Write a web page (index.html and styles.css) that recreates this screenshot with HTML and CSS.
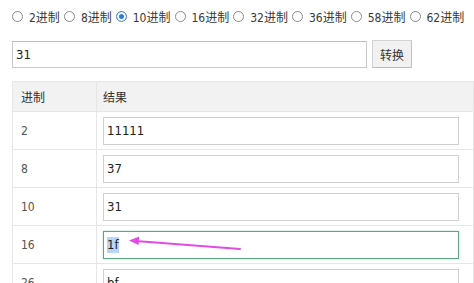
FILE: index.html
```html
<!DOCTYPE html>
<html lang="zh">
<head>
<meta charset="utf-8">
<title>进制转换</title>
<link rel="stylesheet" href="styles.css">
</head>
<body>
<div class="page">
  <div class="radios">
    <label class="opt"><input type="radio" name="base"><span>2进制</span></label>
    <label class="opt"><input type="radio" name="base"><span>8进制</span></label>
    <label class="opt"><input type="radio" name="base" checked><span>10进制</span></label>
    <label class="opt"><input type="radio" name="base"><span>16进制</span></label>
    <label class="opt"><input type="radio" name="base"><span>32进制</span></label>
    <label class="opt"><input type="radio" name="base"><span>36进制</span></label>
    <label class="opt"><input type="radio" name="base"><span>58进制</span></label>
    <label class="opt"><input type="radio" name="base"><span>62进制</span></label>
  </div>
  <div class="form-row">
    <input class="num" type="text" value="31">
    <button class="btn" type="button">转换</button>
  </div>
  <table class="result">
    <colgroup><col class="col-base"><col class="col-val"></colgroup>
    <thead>
      <tr><th>进制</th><th class="c-val">结果</th></tr>
    </thead>
    <tbody>
      <tr><td>2</td><td class="c-val"><input class="field" type="text" value="11111"></td></tr>
      <tr><td>8</td><td class="c-val"><input class="field" type="text" value="37"></td></tr>
      <tr><td>10</td><td class="c-val"><input class="field" type="text" value="31"></td></tr>
      <tr><td>16</td><td class="c-val"><div class="field focused"><span class="sel">1f</span></div></td></tr>
      <tr><td>26</td><td class="c-val"><input class="field" type="text" value="bf"></td></tr>
    </tbody>
  </table>
  <svg class="arrow" width="474" height="283" viewBox="0 0 474 283" aria-hidden="true">
    <line x1="240" y1="249" x2="136" y2="241" stroke="#e34ce3" stroke-width="2" stroke-linecap="round"/>
    <polygon points="129,240.5 139.2,236.6 138.6,245" fill="#e34ce3"/>
  </svg>
</div>
</body>
</html>
```

FILE: styles.css
```css
body {
  margin: 0;
  background: #fff;
  color: #555;
  font-family: "DejaVu Sans Condensed", "DejaVu Sans", "Noto Sans CJK SC", sans-serif;
}

.page {
  position: relative;
  padding-left: 12px;
  overflow: hidden;
  height: 283px;
}

.radios {
  display: flex;
  align-items: center;
  height: 32px;
  font-size: 12px;
  color: #3a3a3a;
}

.opt {
  display: flex;
  align-items: center;
  margin-right: 4px;
  white-space: nowrap;
}

.opt input {
  appearance: none;
  -webkit-appearance: none;
  box-sizing: border-box;
  width: 11px;
  height: 11px;
  margin: 0 6px 0 0;
  border: 1px solid #8a8a8a;
  border-radius: 50%;
  background: #fff;
}

.opt input:checked {
  border-color: #5a8fd0;
  background: #2f7be0;
  box-shadow: inset 0 0 0 2px #fff;
}

.form-row {
  display: flex;
  align-items: flex-start;
  margin-top: 8px;
}

.num {
  box-sizing: border-box;
  width: 355px;
  height: 27px;
  margin: 1px 0 0;
  padding: 0 3px;
  border: 1px solid #c9c9c9;
  border-top-color: #bdbdbd;
  font-family: inherit;
  font-size: 13px;
  color: #222;
  outline: none;
}

.btn {
  box-sizing: border-box;
  height: 28px;
  margin-left: 5px;
  padding: 0 7px;
  border: 1px solid #d4d4d4;
  border-bottom-color: #bcbcbc;
  border-right-color: #c4c4c4;
  background: #f1f1f1;
  font-family: inherit;
  font-size: 12px;
  color: #333;
}

.result {
  border-collapse: collapse;
  table-layout: fixed;
  width: 462px;
  margin-top: 13px;
  font-size: 12px;
}

.col-base { width: 84px; }

.result th,
.result td {
  border: 1px solid #e6e6e6;
  text-align: left;
  padding: 0 8px;
  color: #555;
}

.result th {
  height: 29px;
  background: #f2f2f2;
  font-weight: normal;
  color: #333;
}

.result td {
  height: 37px;
}

.result .c-val {
  padding: 0 6px;
}

.field {
  box-sizing: border-box;
  display: block;
  width: 356px;
  height: 28px;
  margin: 0;
  padding: 0 3px;
  border: 1px solid #d0d0d0;
  font-family: inherit;
  font-size: 13px;
  color: #222;
  outline: none;
  background: #fff;
}

.focused {
  display: flex;
  align-items: center;
  border-color: #5fa583;
  box-shadow: 0 0 2px #a8dcc0;
}

.sel {
  background: #b5d5fb;
  line-height: 16px;
}

.arrow {
  position: absolute;
  left: 0;
  top: 0;
  pointer-events: none;
}
```
